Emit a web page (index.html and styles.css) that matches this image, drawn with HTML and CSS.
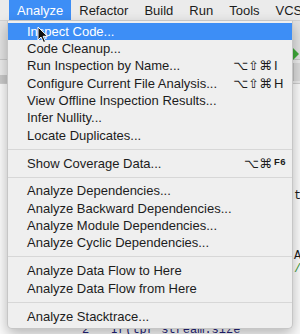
FILE: index.html
```html
<!DOCTYPE html>
<html lang="en">
<head>
    <meta charset="UTF-8">
    <meta name="viewport" content="width=device-width, initial-scale=1.0">
    <title>Analyze Menu</title>
    <link rel="stylesheet" href="styles.css">
</head>
<body>
    <div class="screen">
        <div class="menubar">
            <span class="top-item active">Analyze</span>
            <span class="top-item">Refactor</span>
            <span class="top-item">Build</span>
            <span class="top-item">Run</span>
            <span class="top-item">Tools</span>
            <span class="top-item">VCS</span>
        </div>

        <!-- IDE window behind the menu -->
        <div class="ide">
            <div class="toolbar">
                <span class="run-btn"></span>
            </div>
            <div class="navbar">
                <span class="nav-tab"></span>
                <span class="chevron"></span>
            </div>
            <div class="workspace">
                <div class="project"></div>
                <div class="editor">
                    <div class="code-line gap-t">t</div>
                    <div class="code-line gap-a">A</div>
                    <div class="code-line green">/A</div>
                    <div class="code-line last">2 &nbsp;&nbsp;Ir(tpr_stream.size</div>
                </div>
            </div>
        </div>

        <div class="menu">
            <div class="item selected"><span class="label">Inspect Code...</span></div>
            <div class="item"><span class="label">Code Cleanup...</span></div>
            <div class="item">
                <span class="label">Run Inspection by Name...</span>
                <span class="keys"><span class="mods">⌥⇧⌘</span><span class="key">I</span></span>
            </div>
            <div class="item">
                <span class="label">Configure Current File Analysis...</span>
                <span class="keys"><span class="mods">⌥⇧⌘</span><span class="key">H</span></span>
            </div>
            <div class="item"><span class="label">View Offline Inspection Results...</span></div>
            <div class="item"><span class="label">Infer Nullity...</span></div>
            <div class="item"><span class="label">Locate Duplicates...</span></div>
            <div class="separator"></div>
            <div class="item">
                <span class="label">Show Coverage Data...</span>
                <span class="keys"><span class="mods">⌥⌘</span><span class="key small">F6</span></span>
            </div>
            <div class="separator"></div>
            <div class="item"><span class="label">Analyze Dependencies...</span></div>
            <div class="item"><span class="label">Analyze Backward Dependencies...</span></div>
            <div class="item"><span class="label">Analyze Module Dependencies...</span></div>
            <div class="item"><span class="label">Analyze Cyclic Dependencies...</span></div>
            <div class="separator"></div>
            <div class="item"><span class="label">Analyze Data Flow to Here</span></div>
            <div class="item"><span class="label">Analyze Data Flow from Here</span></div>
            <div class="separator"></div>
            <div class="item"><span class="label">Analyze Stacktrace...</span></div>
        </div>

        <svg class="cursor" width="12" height="18" viewBox="0 0 12 18">
            <path d="M1 1 L1 14 L4 11 L6.5 16.5 L8.5 15.6 L6.2 10.3 L10.5 10.3 Z" fill="#111" stroke="#fff" stroke-width="1"/>
        </svg>
    </div>
</body>
</html>
```

FILE: styles.css
```css
body {
    margin: 0;
    padding: 0;
    font-family: "Liberation Sans", "DejaVu Sans", sans-serif;
    font-size: 13px;
    color: #1c1c1c;
    background-color: #f6f6f6;
}

.screen {
    position: relative;
    width: 300px;
    height: 334px;
    overflow: hidden;
}

/* top menu bar */
.menubar {
    display: flex;
    height: 21px;
    padding-left: 9px;
    background-color: #ebebeb;
    border-bottom: 1px solid #d2d2d2;
    box-sizing: border-box;
}

.top-item {
    padding: 0 8px;
    line-height: 21px;
    white-space: nowrap;
    color: #1c1c1c;
}

.top-item.active {
    background-color: #3d8ef6;
    color: #fff;
}

/* the ide behind */
.ide {
    display: flex;
    flex-direction: column;
    height: 313px;
}

.toolbar {
    display: flex;
    justify-content: flex-end;
    align-items: flex-start;
    flex-shrink: 0;
    height: 39px;
    background-color: #e3e3e3;
    border-bottom: 1px solid #c9c9c9;
    box-sizing: border-box;
}

.run-btn {
    width: 0;
    height: 0;
    margin: 26px 1px 0 0;
    border-top: 7px solid transparent;
    border-bottom: 7px solid transparent;
    border-left: 7px solid #3faa3a;
}

.navbar {
    display: flex;
    justify-content: space-between;
    flex-shrink: 0;
    height: 24px;
    background-color: #ececec;
    border-bottom: 1px solid #cfcfcf;
    box-sizing: border-box;
}

.nav-tab {
    width: 8px;
    height: 8px;
    margin-top: 15px;
    background-color: #c9c9c9;
}

.chevron {
    width: 6px;
    height: 18px;
    margin-top: 3px;
    background-color: #dcdcdc;
    border-left: 1px solid #c4c4c4;
}

.workspace {
    display: flex;
    flex: 1;
    min-height: 0;
}

.project {
    width: 20px;
    background-color: #e8e8e8;
}

.editor {
    flex: 1;
    background-color: #fbfbfb;
    padding-left: 294px;
    font-family: "Liberation Mono", monospace;
    font-size: 12px;
    color: #1a1a1a;
}

.code-line {
    height: 13px;
    line-height: 13px;
    white-space: nowrap;
}

.gap-t {
    margin-top: 106px;
}

.gap-a {
    margin-top: 47px;
}

.green {
    color: #3a9a3a;
}

.code-line.last {
    margin-top: 48px;
    margin-left: -212px;
    color: #23237a;
}

/* dropdown menu */
.menu {
    position: absolute;
    left: 7px;
    top: 21px;
    width: 286px;
    padding: 1.5px 0 3px;
    background-color: #efefef;
    border: 1px solid #c6c6c6;
    border-top: none;
    border-radius: 0 0 5px 5px;
    box-shadow: 0 5px 14px rgba(0, 0, 0, 0.28);
    box-sizing: border-box;
}

.item {
    display: flex;
    justify-content: space-between;
    align-items: center;
    height: 17.33px;
    padding: 0 6px 0 19px;
    white-space: nowrap;
}

.item.selected {
    background-color: #3d8ef6;
    color: #fff;
}

.keys {
    display: flex;
    font-family: "DejaVu Sans", sans-serif;
    font-size: 13px;
}

.key {
    width: 12px;
    margin-left: 2px;
    font-family: "Liberation Sans", sans-serif;
    font-size: 13px;
}

.key.small {
    font-size: 9.5px;
    font-weight: bold;
    letter-spacing: 0.5px;
}

.separator {
    height: 1px;
    margin: 4.8px 0;
    background-color: #d7d7d7;
}

.cursor {
    position: absolute;
    left: 37px;
    top: 26px;
}
```
